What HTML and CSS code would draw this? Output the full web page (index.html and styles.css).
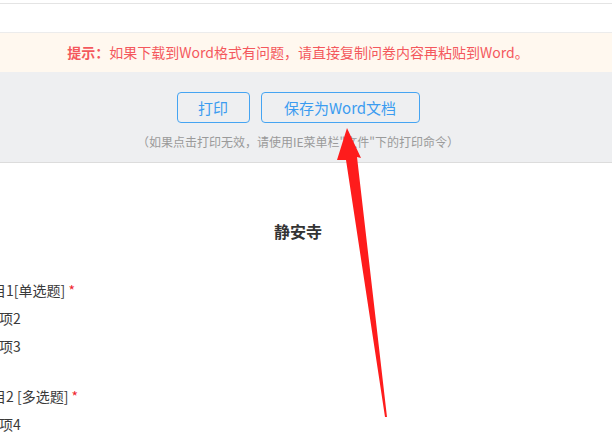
FILE: index.html
```html
<!DOCTYPE html>
<html lang="zh-CN">
<head>
<meta charset="utf-8">
<title>静安寺</title>
<link rel="stylesheet" href="styles.css">
</head>
<body>
<div class="topline"></div>
<div class="topbar"></div>
<div class="tip"><b>提示：</b>如果下载到Word格式有问题，请直接复制问卷内容再粘贴到Word。</div>
<div class="tools">
  <div class="btns">
    <button class="btn btn-print">打印</button>
    <button class="btn btn-word">保存为Word文档</button>
  </div>
  <div class="note">（如果点击打印无效，请使用IE菜单栏"文件"下的打印命令）</div>
</div>
<div class="content">
  <h1 class="title">静安寺</h1>
  <div class="question">
    <div class="q">题目1[单选题] <span class="req">*</span></div>
    <div class="opt">选项2</div>
    <div class="opt">选项3</div>
  </div>
  <div class="question q2">
    <div class="q">题目2 [多选题] <span class="req">*</span></div>
    <div class="opt">选项4</div>
  </div>
</div>
<svg class="arrow" width="612" height="437" viewBox="0 0 612 437">
  <polygon points="347,128 361,158 357,157 387,417 385,417 346,160 337,160" fill="#fe1c1c"/>
</svg>
</body>
</html>
```
FILE: styles.css
```css
html, body {
  margin: 0;
  padding: 0;
  background: #fff;
  overflow: hidden;
  width: 612px;
  height: 437px;
  position: relative;
  font-family: "Noto Sans CJK SC", "Noto Sans", sans-serif;
}
.topline {
  height: 3px;
}
.topbar {
  height: 28px;
  border-top: 1px solid #e4e4e4;
  border-bottom: 1px solid #ececec;
}
.tip {
  background: #fff8ef;
  height: 39px;
  line-height: 39px;
  text-align: center;
  padding-right: 16px;
  color: #f4585d;
  font-size: 14px;
  white-space: nowrap;
}
.tip b {
  font-weight: bold;
}
.tools {
  background: #eeeff1;
  padding: 20px 16px 9px 0;
  border-bottom: 1px solid #dcdcdc;
  height: 61px;
}
.btns {
  display: flex;
  justify-content: center;
  gap: 11px;
}
.btn {
  height: 31px;
  border: 1px solid #45a4f2;
  border-radius: 4px;
  background: transparent;
  color: #3b9cf0;
  font-family: "Noto Sans CJK SC", "Noto Sans", sans-serif;
  font-size: 15px;
  line-height: 29px;
  padding: 0;
  box-sizing: border-box;
}
.btn-print {
  width: 73px;
}
.btn-word {
  width: 159px;
}
.note {
  margin-top: 9px;
  text-align: center;
  font-size: 12px;
  line-height: 20px;
  color: #9a9a9a;
  white-space: nowrap;
}
.content {
  padding-right: 16px;
}
.title {
  margin: 56px 0 0;
  text-align: center;
  font-size: 16px;
  line-height: 24px;
  font-weight: bold;
  color: #333;
}
.question {
  margin: 37px 0 0 -22px;
  color: #3a3a3a;
  font-size: 14px;
}
.q2 {
  margin-top: 30px;
}
.q, .opt {
  line-height: 20px;
  white-space: nowrap;
}
.opt {
  margin-top: 8px;
  padding-left: 7px;
}
.req {
  color: #f0262f;
}
.arrow {
  position: absolute;
  left: 0;
  top: 0;
  pointer-events: none;
}
```
